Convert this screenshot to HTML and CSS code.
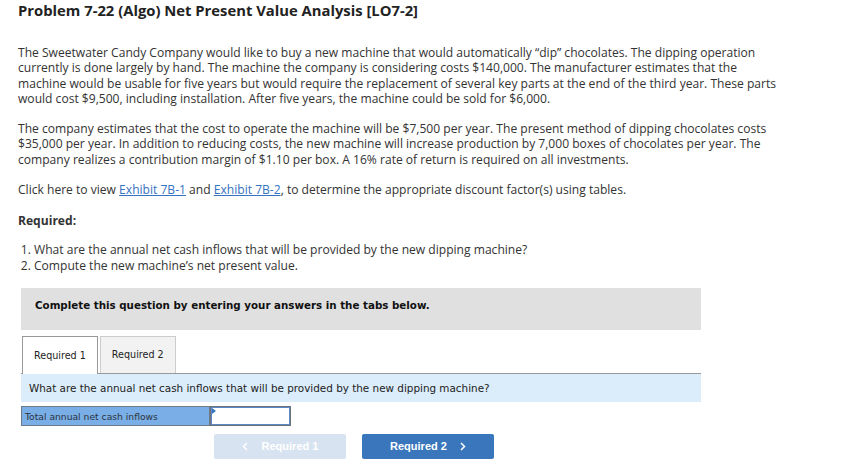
FILE: index.html
```html
<!DOCTYPE html>
<html>
<head>
<meta charset="utf-8">
<link rel="stylesheet" href="styles.css">
</head>
<body>
<div class="page">
  <h1 class="title">Problem 7-22 (Algo) Net Present Value Analysis [LO7-2]</h1>
  <p class="para p1">The Sweetwater Candy Company would like to buy a new machine that would automatically “dip” chocolates. The dipping operation currently is done largely by hand. The machine the company is considering costs $140,000. The manufacturer estimates that the machine would be usable for five years but would require the replacement of several key parts at the end of the third year. These parts would cost $9,500, including installation. After five years, the machine could be sold for $6,000.</p>
  <p class="para p2">The company estimates that the cost to operate the machine will be $7,500 per year. The present method of dipping chocolates costs $35,000 per year. In addition to reducing costs, the new machine will increase production by 7,000 boxes of chocolates per year. The company realizes a contribution margin of $1.10 per box. A 16% rate of return is required on all investments.</p>
  <p class="para p3">Click here to view <a class="link">Exhibit 7B-1</a> and <a class="link">Exhibit 7B-2</a>, to determine the appropriate discount factor(s) using tables.</p>
  <p class="para req">Required:</p>
  <ol class="list">
    <li>What are the annual net cash inflows that will be provided by the new dipping machine?</li>
    <li>Compute the new machine’s net present value.</li>
  </ol>
  <div class="widget">
    <div class="banner">Complete this question by entering your answers in the tabs below.</div>
    <div class="tabs">
      <div class="tab active">Required 1</div>
      <div class="tab">Required 2</div>
    </div>
    <div class="question">What are the annual net cash inflows that will be provided by the new dipping machine?</div>
    <div class="answer">
      <div class="label">Total annual net cash inflows</div>
      <div class="input"><span class="flag"></span></div>
    </div>
    <div class="nav">
      <div class="btn prev"><svg class="chev left" width="6" height="9" viewBox="0 0 6 9"><path d="M5 1 L1.5 4.5 L5 8" fill="none" stroke="#fff" stroke-width="1.5"/></svg>Required 1</div>
      <div class="btn next">Required 2<svg class="chev right" width="6" height="9" viewBox="0 0 6 9"><path d="M1 1 L4.5 4.5 L1 8" fill="none" stroke="#fff" stroke-width="1.5"/></svg></div>
    </div>
  </div>
</div>
</body>
</html>
```
FILE: styles.css
```css
html, body { margin: 0; padding: 0; background: #fff; }
.page { padding: 1px 0 0 18px; width: 765px; font-family: "Open Sans", "Liberation Sans", sans-serif; color: #333; }
.title { font-size: 14.8px; font-weight: 700; margin: 0; line-height: 18px; color: #222; }
.para { font-size: 12.08px; line-height: 15.3px; margin: 0; }
.p1 { margin-top: 26px; }
.p2 { margin-top: 14.8px; }
.p3 { margin-top: 15.5px; }
.link { color: #3572c2; text-decoration: underline; }
.req { margin-top: 15.5px; font-weight: 700; }
.list { margin: 13.5px 0 0 0; padding-left: 16px; font-size: 12.08px; line-height: 15.6px; }
.widget { margin: 14.6px 0 0 3px; width: 680px; font-family: "DejaVu Sans", Verdana, sans-serif; }
.banner { background: #e0e0e0; height: 42px; box-sizing: border-box; padding: 11px 14px; font-size: 10.3px; font-weight: 700; color: #111; }
.tabs { display: flex; gap: 2px; margin-top: 6px; padding-left: 1px; border-bottom: 1px solid #999; }
.tab { height: 37px; box-sizing: border-box; padding: 0 11px; display: flex; align-items: center; font-size: 9.6px; color: #222; border: 1px solid #ccc; border-bottom: none; background: #f2f2f2; }
.tab.active { background: #fff; border-color: #999; margin-bottom: -1px; height: 38px; }
.question { background: #dbecfa; height: 28px; display: flex; align-items: center; padding-left: 8px; font-size: 10.4px; color: #222; }
.answer { display: flex; margin-top: 4.5px; height: 20px; }
.label { width: 189px; box-sizing: border-box; background: #7aaee6; border: 1px solid #6d7a88; display: flex; align-items: center; padding-left: 3px; font-size: 9.2px; color: #2a3440; }
.input { width: 81px; box-sizing: border-box; border: 1px solid #6f7378; box-shadow: inset 0 0 0 1px #5a88c8; background: #fff; position: relative; }
.flag { position: absolute; left: 1px; top: 1px; width: 0; height: 0; border-top: 3px solid transparent; border-bottom: 3px solid transparent; border-left: 4px solid #3a78c6; }
.nav { display: flex; gap: 16px; margin: 7.5px 0 0 193px; }
.btn { width: 132px; height: 25px; border-radius: 2px; display: flex; align-items: center; justify-content: center; font-family: "Liberation Sans", Arial, sans-serif; font-weight: 700; font-size: 11px; }
.prev { background: #d7e3f0; color: #fff; }
.next { background: #3a76bb; color: #fff; }
.chev.left { margin-right: 14px; }
.chev.right { margin-left: 13px; }
```
